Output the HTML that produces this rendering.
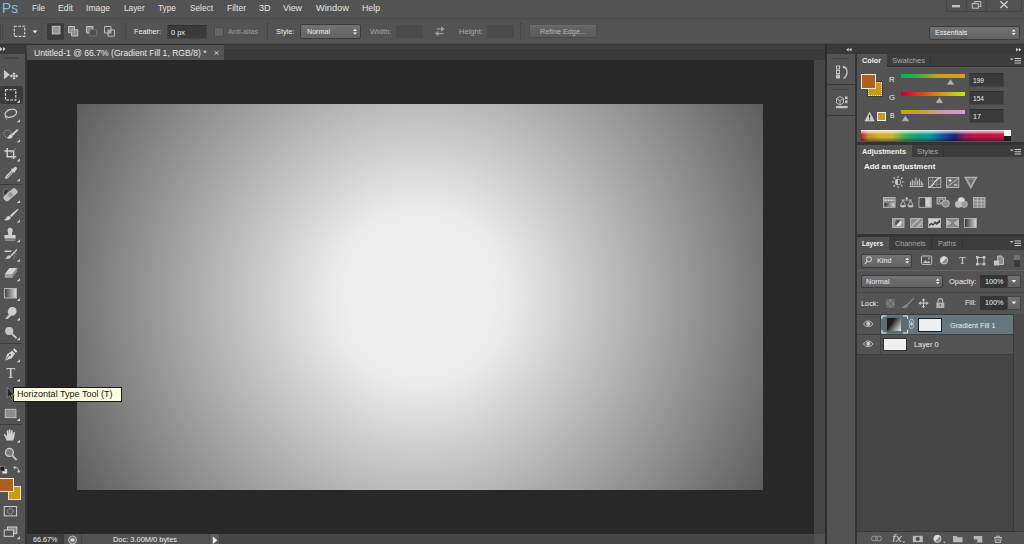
<!DOCTYPE html>
<html>
<head>
<meta charset="utf-8">
<title>Photoshop</title>
<style>
*{box-sizing:border-box;margin:0;padding:0}
html,body{width:1024px;height:544px;overflow:hidden;background:#535353;font-family:"Liberation Sans",sans-serif;font-size:8px;color:#e6e6e6}
.a{position:absolute}
.t{position:absolute;white-space:nowrap;line-height:12px;height:12px;transform-origin:0 50%}
svg{position:absolute;left:0;top:0;overflow:visible}
.dk{background:#3a3a3a}
.inp{background:#3a3a3a;border:1px solid #444;border-top-color:#2f2f2f}
.dd{background:linear-gradient(#727272,#626262);border:1px solid #3c3c3c;border-radius:2px}
#doc{left:77px;top:104px;width:686px;height:386px;background:radial-gradient(circle 400px at 343px 193px,#eeeeee 0,#eeeeee 70px,#eaeaea 90px,#dbdbdb 124px,#5a5a5a 400px)}

</style>
</head>
<body>
<!-- menu / options -->
<div class="a" style="left:0;top:18px;width:1024px;height:1px;background:#4a4a4a"></div>
<div class="a" style="left:946px;top:-2px;width:76px;height:13.5px;border:1px solid #444;border-radius:0 0 3px 3px"></div>
<div class="a" style="left:966px;top:0;width:1px;height:11px;background:#464646"></div>
<div class="a" style="left:986px;top:0;width:1px;height:11px;background:#464646"></div>
<div class="a" style="left:47px;top:23px;width:17px;height:17px;background:#3b3b3b;border-radius:2px"></div>
<div class="a inp" style="left:167px;top:25px;width:39.5px;height:13.5px"></div>
<div class="a" style="left:214px;top:27px;width:10px;height:10px;background:#646464;border:1px solid #4a4a4a"></div>
<div class="a dd" style="left:300px;top:24px;width:61px;height:15px"></div>
<div class="a" style="left:396px;top:25px;width:27px;height:13px;background:#4a4a4a"></div>
<div class="a" style="left:487px;top:25px;width:27px;height:13px;background:#4a4a4a"></div>
<div class="a" style="left:529px;top:25px;width:68px;height:13px;background:linear-gradient(#666,#5a5a5a);border:1px solid #4c4c4c;border-top-color:#6c6c6c;border-radius:2px"></div>
<div class="a dd" style="left:928.5px;top:25.5px;width:91px;height:14.5px"></div>
<div class="a" style="left:0;top:43px;width:1024px;height:1px;background:#484848"></div>
<div class="a" style="left:0;top:44px;width:1024px;height:1px;background:#333"></div>
<!-- document area -->
<div class="a" style="left:26px;top:45px;width:799px;height:15px;background:#393939"></div>
<div class="a" style="left:26px;top:45px;width:799px;height:3.5px;background:#3f3f3f"></div>
<div class="a" style="left:27px;top:45px;width:197px;height:15px;background:#535353"></div>
<div class="a" style="left:26px;top:60px;width:788px;height:474px;background:#282828"></div>
<div class="a" style="left:814px;top:60px;width:11px;height:474px;background:#454545"></div>
<div class="a" id="doc"></div>
<!-- status bar -->
<div class="a" style="left:26px;top:533.5px;width:799px;height:11px;background:#535353"></div>
<div class="a" style="left:27px;top:534px;width:36px;height:10px;background:#3e3e3e"></div>
<div class="a" style="left:63px;top:534px;width:1px;height:10px;background:#3a3a3a"></div>
<div class="a" style="left:81px;top:534px;width:1px;height:10px;background:#464646"></div>
<div class="a" style="left:209px;top:534px;width:1px;height:10px;background:#464646"></div>
<div class="a" style="left:219px;top:533.5px;width:595px;height:11px;background:#464646"></div>
<div class="a" style="left:210px;top:533.5px;width:9px;height:11px;background:#5c5c5c"></div>
<!-- toolbar -->
<div class="a" style="left:0;top:45px;width:25px;height:499px;background:#535353"></div>
<div class="a" style="left:0;top:45px;width:26px;height:9px;background:#3a3a3a"></div>
<div class="a" style="left:25px;top:54px;width:1.5px;height:490px;background:#343434"></div>
<div class="a" style="left:0;top:86px;width:22.5px;height:18px;background:#3a3a3a;border-radius:2px"></div>
<div class="a" style="left:0;top:184px;width:22px;height:1px;background:#3e3e3e"></div>
<div class="a" style="left:0;top:343px;width:22px;height:1px;background:#3e3e3e"></div>
<div class="a" style="left:0;top:423.5px;width:22px;height:1px;background:#3e3e3e"></div>
<!-- tool swatches -->
<div class="a" style="left:7.5px;top:486px;width:13.3px;height:13.8px;background:#c79a1c;border:1px solid #e8e0c0"></div>
<div class="a" style="left:-1px;top:478px;width:14.5px;height:14px;background:#b0601c;border:1px solid #f0e8e0"></div>
<!-- tooltip -->
<div class="a" style="left:13px;top:387px;width:109px;height:14.5px;background:#ffffe1;border:1px solid #1a1a1a"></div>
<!-- right column -->
<div class="a" style="left:825px;top:45px;width:2px;height:499px;background:#2c2c2c"></div>
<div class="a" style="left:827px;top:45px;width:197px;height:9px;background:#393939"></div>
<div class="a" style="left:827px;top:54px;width:28px;height:490px;background:#535353"></div>
<div class="a" style="left:827px;top:84px;width:28px;height:1px;background:#383838"></div>
<div class="a" style="left:827px;top:115px;width:28px;height:1px;background:#383838"></div>
<div class="a" style="left:855px;top:54px;width:2px;height:490px;background:#333"></div>
<!-- color panel -->
<div class="a" style="left:857px;top:54px;width:167px;height:13px;background:#3d3d3d"></div>
<div class="a" style="left:857px;top:54px;width:30px;height:13px;background:#535353"></div>
<div class="a" style="left:930px;top:54px;width:1px;height:12px;background:#333"></div>
<div class="a" style="left:887px;top:66px;width:137px;height:1px;background:#2e2e2e"></div>
<div class="a" style="left:887px;top:67px;width:137px;height:1px;background:#606060"></div>
<div class="a" style="left:867px;top:80.5px;width:16px;height:16px;border:1px solid #3c3c3c"></div>
<div class="a" style="left:868px;top:81.5px;width:14px;height:14px;background:#c79a1c;border:1px dotted #e8e0b8"></div>
<div class="a" style="left:861px;top:74px;width:14.5px;height:14.5px;background:#b0601c;border:1px solid #f0ece0"></div>
<div class="a" style="left:876.5px;top:111.5px;width:9.5px;height:9.5px;background:#c79a1c;border:1px solid #eee"></div>
<div class="a" style="left:900.5px;top:74px;width:64px;height:4px;background:linear-gradient(90deg,#00b050 0%,#30b050 25%,#c0a020 55%,#d8a018 100%)"></div>
<div class="a" style="left:900.5px;top:92px;width:64px;height:4px;background:linear-gradient(90deg,#c80030 0%,#c85020 35%,#c8a020 65%,#c8e020 100%)"></div>
<div class="a" style="left:900.5px;top:110px;width:64px;height:4px;background:linear-gradient(90deg,#c8a010 0%,#c8a020 20%,#d09890 55%,#d898e0 100%)"></div>
<div class="a inp" style="left:969px;top:73px;width:35px;height:14px"></div>
<div class="a inp" style="left:969px;top:91px;width:35px;height:14px"></div>
<div class="a inp" style="left:969px;top:109px;width:35px;height:14px"></div>
<div class="a" style="left:861px;top:129.5px;width:143.5px;height:11.5px;background:linear-gradient(180deg,rgba(255,255,255,.9) 0%,rgba(255,255,255,.5) 20%,rgba(255,255,255,0) 42%,rgba(0,0,0,0) 65%,rgba(0,0,0,.4) 100%),linear-gradient(90deg,#c01848 0%,#c8902c 5%,#d0b030 13%,#ccb434 22%,#48ac58 30%,#18a470 37%,#1094a4 48%,#1a4a98 58%,#1c2474 65%,#8c1c5c 72%,#bc1446 79%,#c41446 100%)"></div>
<div class="a" style="left:1004px;top:129.5px;width:7px;height:6px;background:#f4f4f4"></div>
<div class="a" style="left:1004px;top:135.5px;width:7px;height:5.5px;background:#1c1c1c"></div>
<!-- adjustments panel -->
<div class="a" style="left:857px;top:142px;width:167px;height:2.5px;background:#333"></div>
<div class="a" style="left:857px;top:144.5px;width:167px;height:12.5px;background:#3d3d3d"></div>
<div class="a" style="left:857px;top:144.5px;width:55px;height:13px;background:#535353"></div>
<div class="a" style="left:943px;top:145px;width:1px;height:12px;background:#333"></div>
<!-- layers panel -->
<div class="a" style="left:857px;top:234px;width:167px;height:2.5px;background:#333"></div>
<div class="a" style="left:857px;top:236.5px;width:167px;height:13px;background:#3d3d3d"></div>
<div class="a" style="left:857px;top:236.5px;width:32px;height:13.5px;background:#535353"></div>
<div class="a" style="left:931px;top:237px;width:1px;height:12px;background:#333"></div>
<div class="a" style="left:962px;top:237px;width:1px;height:12px;background:#333"></div>
<div class="a dd" style="left:861px;top:254px;width:51px;height:13.5px"></div>
<div class="a" style="left:1013.5px;top:254.5px;width:6.5px;height:12.5px;background:linear-gradient(#707070 0,#707070 42%,#3a3a3a 42%);border-radius:1px"></div>
<div class="a" style="left:857px;top:270px;width:167px;height:1px;background:#626262"></div>
<div class="a dd" style="left:861px;top:275px;width:82px;height:13px"></div>
<div class="a" style="left:980px;top:274.5px;width:27px;height:13.5px;background:#353535"></div>
<div class="a" style="left:1007px;top:274.5px;width:13.5px;height:13.5px;background:linear-gradient(#727272,#606060);border:1px solid #444"></div>
<div class="a" style="left:857px;top:292px;width:167px;height:1px;background:#484848"></div>
<div class="a" style="left:980px;top:295.5px;width:27px;height:14px;background:#353535"></div>
<div class="a" style="left:1007px;top:295.5px;width:13.5px;height:14px;background:linear-gradient(#727272,#606060);border:1px solid #444"></div>
<div class="a" style="left:857px;top:313.5px;width:167px;height:217px;background:#454545"></div>
<div class="a" style="left:857px;top:313.5px;width:156px;height:1px;background:#3a3a3a"></div>
<div class="a" style="left:857px;top:314.5px;width:156px;height:39.5px;background:#535353"></div>
<div class="a" style="left:880px;top:314.5px;width:133px;height:19.5px;background:#64777e"></div>
<div class="a" style="left:857px;top:333.5px;width:156px;height:1px;background:#404040"></div>
<div class="a" style="left:857px;top:353.5px;width:156px;height:1px;background:#3a3a3a"></div>
<div class="a" style="left:879.5px;top:314px;width:1px;height:40px;background:#424242"></div>
<div class="a" style="left:1012.5px;top:313.5px;width:11.5px;height:217px;background:#4a4a4a;border-left:1px solid #3a3a3a"></div>
<div class="a" style="left:882px;top:316px;width:25.5px;height:17px;background:#5a6c74"></div>
<div class="a" style="left:886.5px;top:317.5px;width:14.5px;height:13.5px;background:linear-gradient(125deg,#1c1c1c 35%,#555 50%,#e0e0e0 95%)"></div>
<div class="a" style="left:918px;top:317.5px;width:24px;height:14px;background:#eee;border:1px solid #1e1e2a"></div>
<div class="a" style="left:882.5px;top:337.5px;width:24.5px;height:13px;background:#eee;border:1px solid #333"></div>
<div class="a" style="left:857px;top:530.5px;width:167px;height:1px;background:#3a3a3a"></div>
<div class="a" style="left:857px;top:531.5px;width:167px;height:13px;background:#535353"></div>

<svg width="1024" height="544" viewBox="0 0 1024 544">
<!-- options bar -->
<g fill="none" stroke="#3a3a3a" stroke-width="1" stroke-dasharray="1 1">
<path d="M0.5 24V40M2.5 25V40"/>
<path d="M41.5 23V41M125.5 23V41M267.5 23V41M520.5 23V41"/>
<path d="M5 57.5H19M4 58.5H18"/>
<path d="M833 58.5H848M833 89.5H848"/>
</g>
<rect x="14.3" y="26.2" width="10.4" height="10.2" fill="none" stroke="#d6d6d6" stroke-width="1.1" stroke-dasharray="2.7 1.3"/>
<path d="M32.6 30.5h4.8l-2.4 2.7z" fill="#f2f2f2"/>
<rect x="52.3" y="26.3" width="7.6" height="7.6" fill="#969696" stroke="#c4c4c4" stroke-width="1"/>
<path d="M68.5 26.5h6v3.2h3.3v6.3h-6.3v-3.2h-3z" fill="#8c8c8c" stroke="#c0c0c0" stroke-width="1"/>
<path d="M71.5 29.7h3v3h-3z" fill="none" stroke="#aaa" stroke-width=".6"/>
<path d="M86.5 26.5h6.5v3.2h-3.3v3.3h-3.2z" fill="#8c8c8c" stroke="#c0c0c0" stroke-width="1"/>
<path d="M89.7 29.7h7v6.3h-7z" fill="#4c4c4c" stroke="#777" stroke-width=".9"/>
<path d="M104.5 26.5h6.5v6.5h-6.5z" fill="none" stroke="#b8b8b8" stroke-width="1"/>
<path d="M108 30h6.5v6.2h-6.5z" fill="none" stroke="#b8b8b8" stroke-width="1"/>
<path d="M108 30h3v3h-3z" fill="#aaa"/>
<g fill="#f0f0f0">
<path d="M353 31l2-2.3 2 2.300z M353 32.400h4l-2 2.300z"/>
<path d="M1011.800 31.500l2-2.300 2 2.300z M1011.800 32.900h4l-2 2.300z"/>
<path d="M905.300 260l1.900-2.300 1.900 2.300z M905.300 261.300h3.800l-1.900 2.300z"/>
<path d="M935.800 280.700l1.900-2.300 1.900 2.300z M935.800 282h3.800l-1.900 2.300z"/>
<path d="M1011.600 280h4.600l-2.300 2.800z M1011.600 301.500h4.600l-2.300 2.800z"/>
</g>
<g stroke="#9c9c9c" stroke-width="1.200" fill="#9c9c9c">
<path d="M436.500 29h5" fill="none"/><path d="M441 26.300l3.700 2.700-3.700 2.700z" stroke="none"/>
<path d="M438 33.500h5.500" fill="none"/><path d="M438.500 30.800l-3.700 2.700 3.700 2.700z" stroke="none"/>
</g>
<!-- window controls -->
<rect x="952" y="5" width="8" height="2.400" fill="#c4c4c4"/>
<rect x="974.700" y="1.500" width="6" height="5" fill="none" stroke="#bdbdbd" stroke-width="1"/>
<rect x="972.300" y="3.600" width="6" height="4.600" fill="#535353" stroke="#bdbdbd" stroke-width="1"/>
<path d="M1000.300 1.300l7.400 6.700M1007.700 1.300l-7.400 6.700" stroke="#cfcfcf" stroke-width="1.500" fill="none"/>
<!-- tab close -->
<path d="M214.500 51.200l4 3.400M218.500 51.200l-4 3.400" stroke="#d0d0d0" stroke-width="1" fill="none"/>
<!-- collapse arrows -->
<g fill="#d0d0d0">
<path d="M0 47l2.600 2.100-2.600 2.100zM3 47l2.600 2.100-2.600 2.100z"/>
<path d="M1016 47.800l2.500 1.900-2.500 1.900zM1018.800 47.800l2.500 1.900-2.500 1.900z"/>
<path d="M848.700 47.800l-2.500 1.900 2.500 1.900zM851.500 47.800l-2.500 1.900 2.500 1.900z"/>
</g>
<!-- panel menus -->
<g fill="#c8c8c8">
<path d="M1010 58.500h3.400l-1.700 2zM1014.500 58h6.500v1h-6.500zM1014.500 60.300h6.500v1h-6.500zM1014.500 62.600h6.500v1h-6.500z"/>
<path d="M1010 149.500h3.400l-1.700 2zM1014.500 149h6.500v1h-6.500zM1014.500 151.300h6.500v1h-6.500zM1014.500 153.600h6.500v1h-6.500z"/>
<path d="M1010 241h3.400l-1.700 2zM1014.500 240.500h6.500v1h-6.500zM1014.500 242.800h6.500v1h-6.500zM1014.500 245.100h6.500v1h-6.500z"/>
</g>
<!-- icon column: history + 3D -->
<g fill="none" stroke="#c4c4c4" stroke-width="1">
<rect x="836.500" y="66" width="3" height="3"/><rect x="836.500" y="70.500" width="3" height="3"/>
<rect x="836.500" y="75" width="3" height="3" fill="#c4c4c4"/>
<path d="M843 67.500c3-1 4.500 2 4 5.500-.4 2.500-1.500 4.500-3.500 5.500" stroke-width="1.400"/>
<path d="M842.300 66l3 .3-1.200 2.800z" fill="#c4c4c4" stroke="none"/>
<path d="M836.500 98.500l3.500-2 3.500 2v4.500l-3.500 2-3.500-2zM836.500 98.500l3.500 2 3.500-2M840 100.500v4.500" stroke-width=".9"/>
<rect x="845" y="96.500" width="2.600" height="2.600" fill="#c4c4c4" stroke="none"/>
<rect x="845" y="100.500" width="2.600" height="2.600" fill="#c4c4c4" stroke="none"/>
<rect x="836" y="106" width="11.600" height="2.200" fill="#c4c4c4" stroke="none"/>
</g>
<!-- color sliders thumbs -->
<g fill="#b4b4b4" stroke="#777" stroke-width=".5">
<path d="M946.800 84.800l3.700-5.600 3.700 5.600z"/>
<path d="M935.700 103l3.700-5.600 3.700 5.600z"/>
<path d="M901.700 121.200l3.700-5.600 3.700 5.600z"/>
</g>
<path d="M865 121l4.600-8.800 4.600 8.800z" fill="#c8c8c8" stroke="#e0e0e0" stroke-width=".6"/>
<path d="M869.600 114.800v3.600M869.600 119.300v1" stroke="#333" stroke-width="1.100"/>
</svg>

<svg width="1024" height="544" viewBox="0 0 1024 544">
<defs><linearGradient id="gtool" x1="0" x2="1" y1="0" y2="0"><stop offset="0" stop-color="#3c3c3c"/><stop offset="1" stop-color="#e0e0e0"/></linearGradient></defs>
<g fill="#d8d8d8"><path d="M19.900 99.7v3h-3z"/><path d="M19.900 119.2v3h-3z"/><path d="M19.900 139.2v3h-3z"/><path d="M19.900 158.5v3h-3z"/><path d="M19.900 178.2v3h-3z"/><path d="M19.900 200.0v3h-3z"/><path d="M19.900 219.5v3h-3z"/><path d="M19.900 239.2v3h-3z"/><path d="M19.900 258.8v3h-3z"/><path d="M19.900 278.2v3h-3z"/><path d="M19.900 298.0v3h-3z"/><path d="M19.900 317.6v3h-3z"/><path d="M19.900 337.2v3h-3z"/><path d="M19.900 359.2v3h-3z"/><path d="M19.900 378.5v3h-3z"/><path d="M19.900 418.0v3h-3z"/><path d="M19.900 439.7v3h-3z"/><path d="M19.900 536.2v3h-3z"/></g>

<g fill="#cfcfcf" stroke="none">
<!-- move -->
<path d="M4 70v9.200l5.800-4.400z"/>
<path d="M14 72.300l1.700 2h-1.200v1.200h1.800v-1.200l2 1.700-2 1.700v-1.200h-1.800v1.300h1.200l-1.700 2-1.700-2h1.200v-1.300h-1.800v1.200l-2-1.700 2-1.700v1.200h1.800v-1.200h-1.200z" fill="#dcdcdc"/>
</g>
<!-- marquee -->
<rect x="5.500" y="89.800" width="10.300" height="10.200" fill="none" stroke="#dedede" stroke-width="1.100" stroke-dasharray="2.700 1.200"/>
<!-- lasso -->
<g fill="none" stroke="#cfcfcf" stroke-width="1.200">
<ellipse cx="10.800" cy="113.300" rx="6" ry="3.800" transform="rotate(-18 10.800 113.300)"/>
<path d="M6.300 115.800c-1.500 1-.8 2.800.8 3.400" stroke-width="1"/>
</g>
<!-- quick select -->
<g>
<circle cx="7.600" cy="133.700" r="3.700" fill="none" stroke="#b8b8b8" stroke-width=".9" stroke-dasharray="1.200 1.200"/>
<path d="M17.300 129l-6 5.300 1.500 1.700 5.700-5.900z" fill="#cfcfcf"/>
<path d="M11.500 134.500c-1.500-.2-2.600.8-3 2-.4 1-1.200 1.300-2 1.300 2 1.500 5.500 1 6.300-1.800z" fill="#d6d6d6"/>
</g>
<!-- crop -->
<g fill="none" stroke="#cfcfcf" stroke-width="1.500">
<path d="M7.200 148v8.800h9"/><path d="M4.300 150.900h9.300v8"/>
<path d="M10 154l6-6" stroke-width=".7" stroke="#aaa"/>
</g>
<!-- eyedropper -->
<g fill="#cfcfcf" transform="translate(-0.3 -1.1)">
<path d="M16.800 168.300c.8.800.6 1.900-.2 2.700l-1.300 1.300.6.600-1 1-.7-.7-5.800 5.800-2.300 1-.8-.8 1-2.300 5.800-5.800-.7-.7 1-1 .6.600 1.300-1.300c.8-.8 1.800-1 2.500-.4z"/>
<path d="M12.400 172.800l-5.300 5.300.6.600 5.300-5.300z" fill="#6a6a6a"/>
</g>
<!-- healing / bandage -->
<g>
<path d="M4 190.500c1.500-2.500 4.500-2 5 .5l-4 5.500c-1.800-1.500-2.200-4-1-6z" fill="#3a3a3a" stroke="#9a9a9a" stroke-width=".6"/>
<rect x="3" y="191.800" width="15" height="5.800" rx="2.200" fill="#bdbdbd" stroke="#d8d8d8" stroke-width=".6" transform="rotate(-40 10.500 194.700)"/>
<rect x="8.300" y="192.600" width="4.400" height="4.200" fill="#969696" transform="rotate(-40 10.500 194.700)"/>
</g>
<!-- brush -->
<g fill="#cfcfcf">
<path d="M17.600 208.700l-7.700 6.800 1.600 1.700 7-7.600z"/>
<path d="M9.600 216.200c-1.700-.5-3 .4-3.500 1.700-.4 1-1.200 1.500-2.300 1.600 2 1.500 6 1.200 7.200-1.800z"/>
</g>
<!-- stamp -->
<g fill="#cfcfcf">
<path d="M10.200 227.800a2.500 2.500 0 0 1 2.400 3.200c-.4 1.300-.9 2.500-.6 4h3.600v3.400h-11.200v-3.400h3.800c.3-1.500-.2-2.700-.6-4a2.500 2.500 0 0 1 2.600-3.200z"/>
<path d="M5 239.600h10.400v1h-10.400z" fill="#b0b0b0"/>
</g>
<!-- history brush -->
<g fill="#cfcfcf">
<path d="M16.600 249l-6 6 1.200 1.300 5.600-6.400z"/>
<path d="M10 255.300c-1.500-.3-2.600.5-3.100 1.600-.4.900-1.100 1.300-2.100 1.400 2 1.300 5.500 1 6.500-1.700z"/>
<path d="M4.500 250.500h7.500l-1.500 1.600h-6z"/>
<path d="M14.300 255.500l.8 1.500M15.500 253.500l.8 1.500M13.500 258l.5 1" stroke="#aaa" stroke-width=".7"/>
</g>
<!-- eraser -->
<g>
<path d="M9.500 268h7.800l-4.700 6h-7.800z" fill="#d4d4d4"/>
<path d="M4.800 274h7.800v3.800h-7.800z" fill="#a4a4a4"/>
<path d="M12.600 274l4.700-6v3.500l-4.700 6.300z" fill="#8c8c8c"/>
</g>
<!-- gradient -->
<rect x="4.500" y="288.500" width="12" height="9.500" fill="url(#gtool)" stroke="#b4b4b4" stroke-width="1"/>
<!-- smudge -->
<path d="M11 307.200c3.500-.6 5.800 1.200 5.600 4.300-.2 2.700-2.700 4.600-5.400 4.200l-3.300 3-2.800.2 3.400-4.500c-1.800-3 .0-6.700 2.500-7.200z" fill="#cfcfcf"/>
<path d="M9.300 313.600l-2.600 3.700" stroke="#777" stroke-width=".7" fill="none"/>
<!-- dodge -->
<circle cx="9.200" cy="331" r="4.100" fill="#c4c4c4"/>
<path d="M12 334l4.600 4.200" stroke="#cfcfcf" stroke-width="1.700" fill="none"/>
<!-- pen -->
<g>
<path d="M12.300 350.800l2.800 2.800-3.500 5-6.800 1.800 2.500-6.500z" fill="#cfcfcf"/>
<path d="M5.200 360l4.500-4.800" stroke="#555" stroke-width=".8" fill="none"/>
<circle cx="10" cy="355" r="1" fill="#555"/>
<path d="M13 349.800l1.400-1.600 3 3-1.500 1.500z" fill="#dcdcdc"/>
</g>
<!-- path selection arrow (dark) -->
<path d="M7.200 387.200v11l2.500-2.300 1.700 3.700 1.600-.7-1.700-3.600h3.200z" fill="#262626" stroke="#8c8c8c" stroke-width=".8"/>
<!-- rectangle -->
<rect x="5.300" y="409.300" width="10.600" height="8.300" fill="#8e8e8e" stroke="#bcbcbc" stroke-width="1"/>
<!-- hand -->
<path d="M6.600 440.500c-.8-2-1.800-3.800-2.700-5.400-.4-.9.700-1.500 1.300-.8l1.600 2v-5.200c0-1 1.400-1 1.500 0l.3 3.500.2-4.600c0-1 1.500-1 1.600 0l.2 4.600.6-4c.2-1 1.500-.8 1.500.2l-.1 4.400.9-2.800c.3-.9 1.500-.6 1.400.3-.3 2.800-.8 5.300-1.600 7.800z" fill="#cfcfcf"/>
<!-- zoom -->
<circle cx="9.400" cy="452.400" r="4" fill="#7c7c7c" stroke="#cfcfcf" stroke-width="1.200"/>
<path d="M12.400 455.600l4.200 4.500" stroke="#c4c4c4" stroke-width="2" fill="none"/>
<!-- default colors / swap -->
<rect x="2.400" y="469" width="4.600" height="4.600" fill="#e4e4e4" stroke="#999" stroke-width=".6"/>
<rect x="0" y="466.300" width="4.800" height="4.800" fill="#1e1e1e" stroke="#9a9a9a" stroke-width=".6"/>
<path d="M15 467.500c2.500 0 3.700 1.300 3.700 3.700" fill="none" stroke="#cfcfcf" stroke-width="1"/>
<path d="M15.300 465.800v3.500l-2.300-1.750zM17 470.800h3.500l-1.750 2.300z" fill="#cfcfcf"/>
<!-- quick mask -->
<rect x="4.200" y="506.500" width="12.400" height="9.400" fill="none" stroke="#cfcfcf" stroke-width="1"/>
<circle cx="10.400" cy="511.200" r="2.800" fill="none" stroke="#cfcfcf" stroke-width=".9" stroke-dasharray="1.300 1"/>
<!-- screen mode -->
<rect x="7.500" y="527" width="9.300" height="6.600" fill="#8a8a8a" stroke="#cfcfcf" stroke-width="1"/>
<rect x="4.200" y="530" width="9.300" height="6.300" fill="#535353" stroke="#cfcfcf" stroke-width="1"/>
<text x="10.600" y="378.400" font-family="Liberation Serif,serif" font-size="14.500" fill="#d8d8d8" text-anchor="middle">T</text>

</svg>
<svg width="1024" height="544" viewBox="0 0 1024 544">
<defs>
<linearGradient id="gh" x1="0" x2="1" y1="0" y2="0"><stop offset="0" stop-color="#303030"/><stop offset="1" stop-color="#d8d8d8"/></linearGradient>
</defs>
<!-- adjustments row 1 -->
<g stroke="#bababa" fill="none" stroke-width=".9">
<g stroke-width="1.100"><path d="M898 175.700v2.300M898 186v2.300M891.700 182h2.300M902 182h2.300M893.500 177.500l1.700 1.700M900.800 184.800l1.700 1.700M893.500 186.500l1.700-1.700M900.800 179.200l1.700-1.700"/></g>
<circle cx="898" cy="182" r="2.900" fill="#535353"/><path d="M898 179.100a2.900 2.900 0 0 0 0 5.800z" fill="#c6c6c6" stroke="none"/>
<path d="M909.500 186.500h14" stroke-width="1.200"/>
<path d="M910.500 185.500v-4M912.300 185.500v-6M914.100 185.500v-4.500M915.900 185.500v-8M917.700 185.500v-5M919.500 185.500v-7M921.300 185.500v-4.500M922.800 185.500v-2.500" stroke-width="1.100"/>
<rect x="928.500" y="177.500" width="12.300" height="10"/>
<path d="M928.500 180.800h12.300M928.500 184.200h12.300M932.600 177.500v10M936.700 177.500v10" stroke="#9a9a9a" stroke-width=".7"/>
<path d="M929 187c5 0 5.500-9 11.500-9" stroke="#e4e4e4" stroke-width="1.100"/>
<rect x="946.500" y="177.500" width="12.300" height="10" fill="#6e6e6e"/>
<path d="M947 187l11.500-9" stroke-width="1"/><path d="M948.500 180.500h3M950 179v3M954 185h3.300" stroke="#e8e8e8" stroke-width="1"/>
<path d="M965 177.200h11.600l-5.800 10.600z" fill="#8a8a8a" stroke-width="1.100"/>
<path d="M968.300 179.500h5l-2.500 4.600z" fill="#666" stroke="none"/>
</g>
<!-- adjustments row 2 -->
<g stroke="#bababa" fill="none" stroke-width=".9">
<rect x="883.500" y="197.500" width="11.600" height="9.800" fill="#8a8a8a"/>
<rect x="884.500" y="202.800" width="9.600" height="3.700" fill="url(#gh)" stroke="none"/>
<path d="M884.500 200.200h9.600" stroke="#ddd" stroke-width="1.600" stroke-dasharray="2 1"/>
<path d="M906.700 197.500v2M901.500 200h10.500M903 200l-2.500 5.300M903 200l2.500 5.300M910.500 200l-2.500 5.300M910.500 200l2.500 5.300" stroke-width=".9"/>
<path d="M900 205.300h6a3 2.200 0 0 1-6 0zM907.500 205.300h6a3 2.200 0 0 1-6 0z" fill="#c6c6c6" stroke="none"/>
<circle cx="906.700" cy="198.300" r="1.100" fill="#c6c6c6" stroke="none"/>
<rect x="919" y="197.500" width="12.300" height="9.800" fill="#4a4a4a"/>
<rect x="925.200" y="198" width="5.600" height="8.800" fill="#cfcfcf" stroke="none"/>
<rect x="937" y="197.500" width="8.500" height="6.500" fill="#7a7a7a"/>
<circle cx="941.200" cy="200.700" r="1.900" fill="#555"/>
<circle cx="945.800" cy="203.600" r="3.600" fill="#8c8c8c"/>
<circle cx="961.300" cy="200.600" r="3.300" fill="#dadada" stroke="#bbb" stroke-width=".6"/>
<circle cx="958.600" cy="204.300" r="3.300" fill="#bcbcbc" stroke="#ccc" stroke-width=".6"/>
<circle cx="964.200" cy="204.300" r="3.300" fill="#9c9c9c" stroke="#ccc" stroke-width=".6"/>
<rect x="973.500" y="197.500" width="11.500" height="9.800" fill="#8a8a8a"/>
<path d="M973.500 200.800h11.500M973.500 204h11.500M977.300 197.500v9.800M981.200 197.500v9.800" stroke-width=".9"/>
</g>
<!-- adjustments row 3 -->
<g stroke="#b4b4b4" fill="none" stroke-width=".9">
<rect x="892.500" y="218.500" width="11.500" height="9" fill="#9a9a9a"/>
<circle cx="898.200" cy="223" r="3" fill="#555" stroke="#555" stroke-width=".5"/>
<path d="M896 225.500l4.500-5a3 3 0 0 1-4.500 5z" fill="#ddd" stroke="none"/>
<rect x="910.500" y="218.500" width="11.800" height="9" fill="#8a8a8a"/>
<path d="M911 226l7-7.500h3l-9.500 9zM915.500 227.500l6.500-6.500v3l-3.500 3.500z" fill="#b4b4b4" stroke="none"/>
<rect x="928.500" y="218.500" width="12" height="9" fill="#d0d0d0"/>
<path d="M929 224.500l2.500-2 1.500 1.500 2-3 1.500 1.500 3.500-3v3l-3.500 2.500-1.500-1.500-2 2.500-1.500-1.500-2.500 2z" fill="#444" stroke="none"/>
<rect x="946.500" y="218.500" width="12" height="9" fill="#8a8a8a"/>
<path d="M947 219l5.500 4-5.500 4zM958 219l-5.500 4 5.500 4z" fill="#b8b8b8" stroke="none"/>
<path d="M947 219l11 8M958 219l-11 8" stroke="#6a6a6a" stroke-width=".7"/>
<rect x="964.500" y="218.500" width="11.800" height="9" fill="url(#gh)"/>
</g>
<!-- layer filter row -->
<g stroke="#c4c4c4" fill="none" stroke-width="1">
<circle cx="869" cy="259.300" r="2.500" stroke-width="1.100"/><path d="M867.300 261.200l-2.500 2.800" stroke-width="1.300"/>
<rect x="921.500" y="256" width="10.200" height="8.400" rx="1"/>
<path d="M923 263l2.300-2.800 1.700 1.700 1.600-1.200 1.800 2.300z" fill="#c4c4c4" stroke="none"/>
<circle cx="929" cy="258.500" r=".9" fill="#c4c4c4" stroke="none"/>
<circle cx="944" cy="260.300" r="3.700" fill="#8a8a8a"/>
<path d="M941.400 262.900a3.700 3.700 0 0 1 5.200-5.200z" fill="#dcdcdc" stroke="none"/>
<rect x="977.500" y="257.500" width="6.500" height="6.500" stroke-width=".9"/>
<g fill="#c4c4c4" stroke="none"><rect x="976" y="256" width="2.600" height="2.600"/><rect x="982.800" y="256" width="2.600" height="2.600"/><rect x="976" y="262.800" width="2.600" height="2.600"/><rect x="982.800" y="262.800" width="2.600" height="2.600"/></g>
<path d="M997.500 256h4l2 2v6.500h-6z" fill="#8e8e8e" stroke-width=".9"/>
<rect x="994" y="260.500" width="5" height="5" fill="#c4c4c4" stroke="none"/>
</g>
<text x="962.300" y="264.200" font-family="Liberation Serif,serif" font-size="11" fill="#d0d0d0" text-anchor="middle">T</text>
<!-- lock row -->
<g>
<rect x="886" y="299" width="8.800" height="8.800" fill="#7c7c7c"/>
<path d="M886 299h2.900v2.900h-2.900zM891.900 299h2.900v2.900h-2.900zM888.900 301.900h3v3h-3zM886 304.900h2.900v2.900h-2.900zM891.900 304.900h2.900v2.900h-2.900z" fill="#686868"/>
<path d="M913.800 298.200l-7 7.200" stroke="#8a8a8a" stroke-width="1.300" fill="none"/>
<path d="M906.800 304.600c-1.500-.2-2.300.6-2.800 1.500-.5.800-1.300 1.200-2.300 1.300 2 1.100 5.300.8 6.200-1.500z" fill="#8a8a8a"/>
<g fill="#c4c4c4"><path d="M923.500 298.300l2 2.300h-1.400v2h2.200v-1.400l2.300 2-2.300 2v-1.400h-2.200v2.200h1.400l-2 2.300-2-2.300h1.400v-2.200h-2.200v1.400l-2.300-2 2.300-2v1.400h2.200v-2h-1.400z"/></g>
<rect x="936.300" y="302.500" width="8" height="5.500" rx=".6" fill="#b4b4b4"/>
<path d="M938 302.500v-1.500a2.300 2.300 0 0 1 4.600 0v1.500" fill="none" stroke="#b4b4b4" stroke-width="1.200"/>
<rect x="939.800" y="304.200" width="1" height="2.200" fill="#444"/>
</g>
<!-- layer rows -->
<g fill="none" stroke="#c8c8c8" stroke-width=".9">
<path d="M863.500 324c2.500-4 7-4 9.500 0-2.500 3.500-7 3.500-9.500 0z"/><circle cx="868.300" cy="323.800" r="1.700" fill="#c8c8c8"/>
<path d="M863.500 344c2.500-4 7-4 9.500 0-2.500 3.500-7 3.500-9.500 0z"/><circle cx="868.300" cy="343.800" r="1.700" fill="#c8c8c8"/>
</g>
<path d="M882 319v-3h4.500M907.500 319v-3h-4.500M882 330v3h4.500M907.500 330v3h-4.500" stroke="#f0f0f0" stroke-width="1" fill="none"/>
<g fill="none" stroke="#c0cdd6" stroke-width=".9"><rect x="909.600" y="319.300" width="3.800" height="4.800" rx="1.700"/><rect x="909.600" y="323.600" width="3.800" height="4.800" rx="1.700"/><path d="M911.500 321.500v4.500"/></g>
<!-- bottom bar -->
<g fill="none" stroke="#9a9a9a" stroke-width="1">
<rect x="871.500" y="536.200" width="6" height="4.600" rx="2.300"/><rect x="875.500" y="536.200" width="6" height="4.600" rx="2.300"/>
</g>
<text x="892.300" y="541.800" font-family="Liberation Sans,sans-serif" font-style="italic" font-size="10" fill="#c8c8c8" textLength="9.500" lengthAdjust="spacingAndGlyphs">fx</text>
<path d="M902.500 541.500h2.600l-1.300 1.500z" fill="#c8c8c8"/>
<g stroke="#c4c4c4" stroke-width="1" fill="none">
<rect x="912.800" y="535.800" width="10" height="6.400" fill="#b8b8b8" stroke="none"/><circle cx="917.800" cy="539" r="2" fill="#4a4a4a" stroke="none"/>
<circle cx="937.500" cy="538.800" r="3.600" fill="#8a8a8a"/><path d="M935 541.400a3.600 3.600 0 0 1 5-5.200z" fill="#dcdcdc" stroke="none"/>
<path d="M943 541.800h2.600l-1.300 1.500z" fill="#c4c4c4" stroke="none"/>
<path d="M953 536h3.500l1 1.200h5v5h-9.500z" fill="#b8b8b8" stroke="none"/>
<path d="M973.800 536h8.500v6.500h-5l-3.500-3z" fill="#b8b8b8" stroke="none"/><path d="M973.800 539.500h3.500v3z" fill="#535353" stroke="none"/>
<path d="M994 537.500h8M996.500 537.500v-1.300h3v1.300M994.800 537.500l.6 5h5.200l.6-5M997 538.500v3M999 538.500v3" stroke-width=".9"/>
</g>
<!-- status icon -->
<circle cx="72.500" cy="540" r="4" fill="#6a6a6a" stroke="#c4c4c4" stroke-width=".9"/>
<path d="M70.500 538.500h4v3h-4z" fill="#d8d8d8"/>
<path d="M212.800 536.500v7.500l4.500-3.700z" fill="#f0f0f0"/>
</svg>

<span class="t" style="left:32.0px;top:2.00px;font-size:9.5px;color:#e4e4e4;transform:scaleX(0.849)">File</span>
<span class="t" style="left:58.0px;top:2.00px;font-size:9.5px;color:#e4e4e4;transform:scaleX(0.916)">Edit</span>
<span class="t" style="left:86.0px;top:2.00px;font-size:9.5px;color:#e4e4e4;transform:scaleX(0.909)">Image</span>
<span class="t" style="left:123.7px;top:2.00px;font-size:9.5px;color:#e4e4e4;transform:scaleX(0.871)">Layer</span>
<span class="t" style="left:158.0px;top:2.00px;font-size:9.5px;color:#e4e4e4;transform:scaleX(0.873)">Type</span>
<span class="t" style="left:190.0px;top:2.00px;font-size:9.5px;color:#e4e4e4;transform:scaleX(0.871)">Select</span>
<span class="t" style="left:227.0px;top:2.00px;font-size:9.5px;color:#e4e4e4;transform:scaleX(0.899)">Filter</span>
<span class="t" style="left:259.0px;top:2.00px;font-size:9.5px;color:#e4e4e4;transform:scaleX(0.954)">3D</span>
<span class="t" style="left:283.0px;top:2.00px;font-size:9.5px;color:#e4e4e4;transform:scaleX(0.930)">View</span>
<span class="t" style="left:315.6px;top:2.00px;font-size:9.5px;color:#e4e4e4;transform:scaleX(0.973)">Window</span>
<span class="t" style="left:362.0px;top:2.00px;font-size:9.5px;color:#e4e4e4;transform:scaleX(0.921)">Help</span>
<span class="t" style="left:1.5px;top:2.00px;font-size:14px;color:#8cbce2;transform:scaleX(0.979)">Ps</span>
<span class="t" style="left:134.0px;top:26.00px;font-size:8px;color:#eeeeee;transform:scaleX(0.906)">Feather:</span>
<span class="t" style="left:171.0px;top:26.50px;font-size:8px;color:#eeeeee;transform:scaleX(0.926)">0 px</span>
<span class="t" style="left:228.0px;top:26.00px;font-size:8px;color:#9a9a9a;transform:scaleX(0.912)">Anti-alias</span>
<span class="t" style="left:276.0px;top:26.00px;font-size:8px;color:#eeeeee;transform:scaleX(0.919)">Style:</span>
<span class="t" style="left:307.0px;top:26.00px;font-size:8px;color:#eeeeee;transform:scaleX(0.892)">Normal</span>
<span class="t" style="left:369.7px;top:26.00px;font-size:8px;color:#a8a8a8;transform:scaleX(0.939)">Width:</span>
<span class="t" style="left:458.5px;top:26.00px;font-size:8px;color:#a8a8a8;transform:scaleX(0.946)">Height:</span>
<span class="t" style="left:540.0px;top:26.00px;font-size:8px;color:#b4b4b4;transform:scaleX(0.907)">Refine Edge...</span>
<span class="t" style="left:934.7px;top:27.00px;font-size:8px;color:#eeeeee;transform:scaleX(0.886)">Essentials</span>
<span class="t" style="left:34.4px;top:46.60px;font-size:8.5px;color:#e8e8e8;transform:scaleX(1.011)">Untitled-1 @ 66.7% (Gradient Fill 1, RGB/8) *</span>
<span class="t" style="left:862.0px;top:55.40px;font-size:8px;color:#f0f0f0;font-weight:bold;transform:scaleX(0.909)">Color</span>
<span class="t" style="left:892.0px;top:55.40px;font-size:8px;color:#a8a8a8;transform:scaleX(0.951)">Swatches</span>
<span class="t" style="left:889.0px;top:74.00px;font-size:8px;color:#eeeeee;transform:scaleX(0.969)">R</span>
<span class="t" style="left:889.0px;top:92.00px;font-size:8px;color:#eeeeee;transform:scaleX(0.962)">G</span>
<span class="t" style="left:890.0px;top:110.40px;font-size:8px;color:#eeeeee;transform:scaleX(0.842)">B</span>
<span class="t" style="left:973.0px;top:75.00px;font-size:8px;color:#eeeeee;transform:scaleX(0.823)">199</span>
<span class="t" style="left:973.0px;top:93.00px;font-size:8px;color:#eeeeee;transform:scaleX(0.823)">154</span>
<span class="t" style="left:973.0px;top:111.00px;font-size:8px;color:#eeeeee;transform:scaleX(0.898)">17</span>
<span class="t" style="left:862.0px;top:145.70px;font-size:8px;color:#f0f0f0;font-weight:bold;transform:scaleX(0.908)">Adjustments</span>
<span class="t" style="left:917.0px;top:145.70px;font-size:8px;color:#a8a8a8;transform:scaleX(0.963)">Styles</span>
<span class="t" style="left:863.7px;top:160.70px;font-size:8px;color:#f4f4f4;font-weight:bold;transform:scaleX(0.990)">Add an adjustment</span>
<span class="t" style="left:862.0px;top:238.00px;font-size:8px;color:#f0f0f0;font-weight:bold;transform:scaleX(0.814)">Layers</span>
<span class="t" style="left:894.7px;top:238.00px;font-size:8px;color:#a8a8a8;transform:scaleX(0.908)">Channels</span>
<span class="t" style="left:938.0px;top:238.00px;font-size:8px;color:#a8a8a8;transform:scaleX(0.879)">Paths</span>
<span class="t" style="left:876.6px;top:255.00px;font-size:8px;color:#eeeeee;transform:scaleX(0.899)">Kind</span>
<span class="t" style="left:866.0px;top:275.70px;font-size:8px;color:#eeeeee;transform:scaleX(0.912)">Normal</span>
<span class="t" style="left:948.7px;top:275.50px;font-size:8px;color:#eeeeee;transform:scaleX(0.930)">Opacity:</span>
<span class="t" style="left:984.5px;top:276.00px;font-size:8px;color:#eeeeee;transform:scaleX(0.904)">100%</span>
<span class="t" style="left:861.0px;top:298.00px;font-size:8px;color:#eeeeee;transform:scaleX(0.915)">Lock:</span>
<span class="t" style="left:965.0px;top:296.50px;font-size:8px;color:#eeeeee;transform:scaleX(0.883)">Fill:</span>
<span class="t" style="left:984.5px;top:297.00px;font-size:8px;color:#eeeeee;transform:scaleX(0.904)">100%</span>
<span class="t" style="left:949.5px;top:319.70px;font-size:8px;color:#eeeeee;transform:scaleX(0.914)">Gradient Fill 1</span>
<span class="t" style="left:914.0px;top:339.20px;font-size:8px;color:#eeeeee;transform:scaleX(0.918)">Layer 0</span>
<span class="t" style="left:32.5px;top:533.70px;font-size:8px;color:#eeeeee;transform:scaleX(0.903)">66.67%</span>
<span class="t" style="left:113.0px;top:533.70px;font-size:8px;color:#eeeeee;transform:scaleX(0.929)">Doc: 3.00M/0 bytes</span>
<span class="t" style="left:17.0px;top:387.90px;font-size:9px;color:#111;transform:scaleX(1.003)">Horizontal Type Tool (T)</span>
</body>
</html>
